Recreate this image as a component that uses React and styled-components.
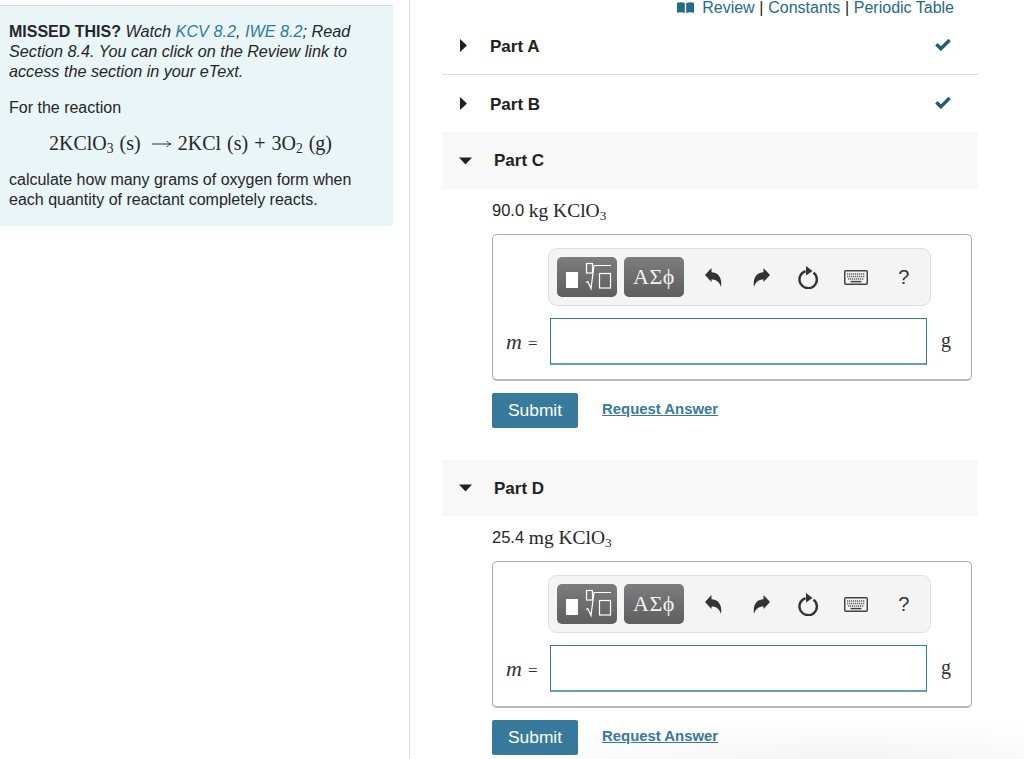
import React from "react";
import styled, { createGlobalStyle } from "styled-components";

const Global = createGlobalStyle`
  html, body { margin: 0; padding: 0; background: #fff; }
  body { font-family: "Liberation Sans", Arial, sans-serif; color: #262626; }
  sub { font-size: 0.68em; line-height: 0; vertical-align: -0.22em; }
`;

const Page = styled.div`
  position: relative;
  display: flex;
  width: 1024px;
  height: 759px;
  overflow: hidden;
`;
const LeftColumn = styled.aside`
  width: 410px;
  height: 100%;
  flex: none;
  padding-top: 5px;
  box-sizing: border-box;
  border-right: 1px solid #d9d9d9;
`;
const InfoPanel = styled.section`
  width: 393px;
  height: 221px;
  box-sizing: border-box;
  padding: 15px 9px 0;
  background: #e9f5f7;
  border-top: 1px solid #d6dee3;
  font-size: 16px;
  line-height: 20px;
`;
const Note = styled.p`
  margin: 0;
  font-size: 16.2px;
  font-style: italic;
  white-space: nowrap;
  b { font-style: normal; font-weight: 700; font-size: 16px; line-height: 0; }
  a { color: #2f7ca3; text-decoration: none; }
`;
const Plain = styled.p`
  margin: ${(p) => p.$top}px 0 0;
  white-space: nowrap;
`;
const Equation = styled.div`
  margin: 13px 0 0 40px;
  font-family: "Liberation Serif", serif;
  font-size: 20px;
  line-height: 24px;
  white-space: nowrap;
  word-spacing: 1px;
`;
const EquationArrow = styled.svg`
  margin: 0 0 0 5px;
  vertical-align: 1px;
`;
const RightColumn = styled.main`
  width: 536px;
  margin-left: 32px;
  flex: none;
  display: flex;
  flex-direction: column;
`;
const TopLinks = styled.nav`
  height: 16px;
  padding-right: 24px;
  display: flex;
  justify-content: flex-end;
  align-items: flex-start;
  gap: 4.700px;
  font-size: 16px;
  line-height: 16px;
  color: #222;
  white-space: nowrap;
  a { color: #256a88; text-decoration: none; }
  svg { margin: 2px 4px 0 0; }
`;
const PartHeader = styled.header`
  height: ${(p) => p.$h}px;
  box-sizing: border-box;
  display: flex;
  align-items: center;
  background: ${(p) => (p.$open ? "#f8f8f8" : "transparent")};
  border-bottom: ${(p) => (p.$line ? "1px solid #dedede" : "none")};
  padding-left: 17px;
  padding-right: 27px;
`;
const PartTitle = styled.h3`
  margin: 0 0 0 22px;
  padding-top: ${(p) => p.$pad || 0}px;
  flex: 1;
  font-size: 17px;
  font-weight: 700;
  color: #222;
`;
const PartBody = styled.section`
  padding-left: 50px;
  padding-right: 6px;
  display: flex;
  flex-direction: column;
`;
const Quantity = styled.div`
  height: 45px;
  display: flex;
  align-items: center;
  padding-bottom: 2px;
  box-sizing: border-box;
  font-size: 16.5px;
  white-space: pre;
`;
const MathText = styled.span`
  font-family: "Liberation Serif", serif;
  font-size: 19.500px;
`;
const AnswerBox = styled.div`
  height: 147px;
  box-sizing: border-box;
  border: 1px solid #aeaeae;
  border-bottom: 2px solid #b8b8b8;
  border-radius: 5px;
  padding: 13px 0 0 55px;
`;
const Toolbar = styled.div`
  width: 383px;
  height: 58px;
  box-sizing: border-box;
  display: flex;
  align-items: center;
  padding: 0 8px;
  background: #f4f4f4;
  border: 1px solid #e0e0e0;
  border-radius: 9px;
`;
const TemplateGroup = styled.div`
  display: flex;
  gap: 7px;
  margin-right: 6px;
`;
const TemplateButton = styled.div`
  width: 60px;
  height: 40px;
  flex: none;
  display: flex;
  align-items: center;
  justify-content: center;
  border-radius: 5px;
  color: #f2f2f2;
  font-family: "Liberation Serif", serif;
  font-size: 22px;
  letter-spacing: 0.5px;
  padding-bottom: 1px;
  box-sizing: border-box;
  background: linear-gradient(#7d7d7d, #5e5e5e);
  svg { margin-top: 1px; }
`;
const ToolIcon = styled.div`
  width: 47.500px;
  height: 40px;
  flex: none;
  display: flex;
  align-items: center;
  justify-content: center;
  color: #333;
  font-size: 20px;
`;
const InputRow = styled.div`
  display: flex;
  align-items: center;
  margin: 12px 0 0 -42px;
`;
const VarLabel = styled.span`
  width: 44px;
  flex: none;
  font-family: "Liberation Serif", serif;
  font-size: 17px;
  color: #333;
  i { font-size: 22px; margin-right: 6px; }
`;
const AnswerInput = styled.div`
  width: 377px;
  height: 47px;
  flex: none;
  box-sizing: border-box;
  background: #fff;
  border: 1px solid #2f7a9e;
  border-bottom-color: #6a9db6;
  border-bottom-width: 2px;
`;
const Unit = styled.span`
  margin-left: 14px;
  padding-bottom: 2px;
  font-family: "Liberation Serif", serif;
  font-size: 20px;
  color: #333;
`;
const ActionRow = styled.div`
  margin-top: 12px;
  height: 35px;
  display: flex;
  align-items: center;
`;
const Submit = styled.button`
  width: 86px;
  height: 35px;
  padding: 0;
  border: 0;
  border-radius: 2px;
  background: #377a9c;
  color: #fff;
  font-family: inherit;
  font-size: 17.400px;
`;
const RequestLink = styled.a`
  margin: 0 0 4px 24px;
  font-size: 14.900px;
  font-weight: 700;
  color: #377a9c;
  text-decoration: underline;
`;
const Spacer = styled.div`
  height: 32px;
`;
const BottomShade = styled.div`
  position: absolute;
  right: 0;
  bottom: 0;
  width: 600px;
  height: 40px;
  pointer-events: none;
  background: radial-gradient(ellipse 60% 100% at 70% 100%, rgba(0,0,0,0.045), rgba(0,0,0,0));
`;
const CheckMark = styled.svg`
  margin-bottom: 2px;
`;

const ReactionArrow = () => (
  <EquationArrow width="20" height="10" viewBox="0 0 20 10">
    <path fill="none" stroke="#333" strokeWidth="1" d="M0 5h19M15 2c.6 1.500 2 2.500 4 3-2 .5-3.400 1.500-4 3" />
  </EquationArrow>
);
const Book = () => (
  <svg width="17" height="11" viewBox="0 0 17 11">
    <path fill="#256a88" d="M0 .8C2.500 0 5.500 0 7.800 1v10C5.500 10 2.500 10 0 10.800zM17 .8C14.500 0 11.500 0 9.200 1v10c2.300-1 5.300-1 7.800-.2z" />
  </svg>
);
const Closed = () => (
  <svg width="9" height="13" viewBox="0 0 9 13"><path fill="#222" d="M1 0l7 6.500L1 13z" /></svg>
);
const Open = () => (
  <svg width="13" height="8" viewBox="0 0 13 8"><path fill="#222" d="M0 .5h13L6.500 7.500z" /></svg>
);
const Check = () => (
  <CheckMark width="16" height="13" viewBox="0 0 16 13">
    <path fill="none" stroke="#1f5d78" strokeWidth="3.400" d="M1.400 6.200l4.500 4.500L14.600 2" />
  </CheckMark>
);
const TemplateGlyph = () => (
  <svg width="60" height="40" viewBox="0 0 60 40">
    <rect x="9" y="15" width="12" height="16" fill="#fff" />
    <rect x="29.500" y="6.500" width="6" height="9.500" fill="none" stroke="#fff" strokeWidth="1.200" />
    <path fill="none" stroke="#fff" strokeWidth="1.200" d="M29 25.500l1.800-1 3.200 7 3-23h17" />
    <rect x="42.500" y="16.500" width="11" height="14.500" fill="none" stroke="#fff" strokeWidth="1.200" />
  </svg>
);
const Undo = () => (
  <svg width="17" height="19" viewBox="0 0 17 19">
    <path fill="#333" d="M0 7L6.500 0v4.200C12.500 4.200 17.500 9 16 19 14.500 14 11.500 11.500 6.500 11.500V14z" />
  </svg>
);
const Redo = () => (
  <svg width="17" height="19" viewBox="0 0 17 19">
    <path fill="#333" d="M17 7L10.500 0v4.200C4.500 4.200-.5 9 1 19 2.500 14 5.500 11.500 10.500 11.500V14z" />
  </svg>
);
const Reset = () => (
  <svg width="21" height="23" viewBox="0 0 21 23">
    <path fill="none" stroke="#333" strokeWidth="2.400" d="M7.500 5.200A8.700 8.700 0 1 0 15.500 6.600" />
    <path fill="#333" d="M8 0l6.500 5L8 9.500z" />
  </svg>
);
const Keyboard = () => (
  <svg width="24" height="15" viewBox="0 0 24 15">
    <rect x=".75" y=".75" width="22.500" height="13.500" rx="1" fill="#f4f4f4" stroke="#444" strokeWidth="1.500" />
    <path stroke="#666" strokeWidth="1.500" strokeDasharray="1.300 .7" d="M3 4h18M3 6.500h18M4 9h16" />
    <path stroke="#444" strokeWidth="1.500" d="M6.500 11.600h11" />
  </svg>
);

function Part({ quantity, unitText }) {
  return (
    <PartBody>
      <Quantity>
        {quantity} <MathText>{unitText} KClO<sub>3</sub></MathText>
      </Quantity>
      <AnswerBox>
        <Toolbar>
          <TemplateGroup>
            <TemplateButton><TemplateGlyph /></TemplateButton>
            <TemplateButton>ΑΣϕ</TemplateButton>
          </TemplateGroup>
          <ToolIcon><Undo /></ToolIcon>
          <ToolIcon><Redo /></ToolIcon>
          <ToolIcon><Reset /></ToolIcon>
          <ToolIcon><Keyboard /></ToolIcon>
          <ToolIcon>?</ToolIcon>
        </Toolbar>
        <InputRow>
          <VarLabel><i>m</i>=</VarLabel>
          <AnswerInput />
          <Unit>g</Unit>
        </InputRow>
      </AnswerBox>
      <ActionRow>
        <Submit>Submit</Submit>
        <RequestLink>Request Answer</RequestLink>
      </ActionRow>
    </PartBody>
  );
}

export default function App() {
  return (
    <Page>
      <Global />
      <LeftColumn>
        <InfoPanel>
          <Note>
            <b>MISSED THIS?</b> Watch <a>KCV 8.2</a>, <a>IWE 8.2</a>; Read<br />
            Section 8.4. You can click on the Review link to<br />
            access the section in your eText.
          </Note>
          <Plain $top={17}>For the reaction</Plain>
          <Equation>
            2KClO<sub>3</sub> (s) <ReactionArrow /> 2KCl (s) + 3O<sub>2</sub> (g)
          </Equation>
          <Plain $top={15}>
            calculate how many grams of oxygen form when<br />
            each quantity of reactant completely reacts.
          </Plain>
        </InfoPanel>
      </LeftColumn>
      <RightColumn>
        <TopLinks>
          <Book />
          <a>Review</a> | <a>Constants</a> | <a>Periodic Table</a>
        </TopLinks>
        <PartHeader $h={59} $line>
          <Closed /><PartTitle $pad={3}>Part A</PartTitle><Check />
        </PartHeader>
        <PartHeader $h={57}>
          <Closed /><PartTitle $pad={3}>Part B</PartTitle><Check />
        </PartHeader>
        <PartHeader $h={57} $open>
          <Open /><PartTitle>Part C</PartTitle>
        </PartHeader>
        <Part quantity="90.0" unitText="kg" />
        <Spacer />
        <PartHeader $h={56} $open>
          <Open /><PartTitle $pad={2}>Part D</PartTitle>
        </PartHeader>
        <Part quantity="25.4" unitText="mg" />
      </RightColumn>
      <BottomShade />
    </Page>
  );
}
